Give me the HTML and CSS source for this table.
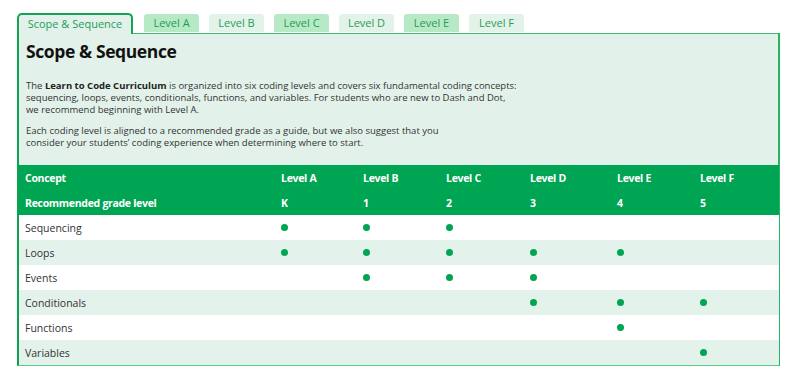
FILE: index.html
```html
<!DOCTYPE html>
<html>
<head>
<meta charset="utf-8">
<link rel="stylesheet" href="styles.css">
</head>
<body>
<div class="wrap">
  <div class="tabs">
    <div class="tab active">Scope &amp; Sequence</div>
    <div class="tab dark">Level A</div>
    <div class="tab light">Level B</div>
    <div class="tab dark">Level C</div>
    <div class="tab light">Level D</div>
    <div class="tab dark">Level E</div>
    <div class="tab light">Level F</div>
  </div>
  <div class="panel">
    <div class="intro">
      <h1 class="title">Scope &amp; Sequence</h1>
      <p class="para">The <b>Learn to Code Curriculum</b> is organized into six coding levels and covers six fundamental coding concepts:<br>sequencing, loops, events, conditionals, functions, and variables. For students who are new to Dash and Dot,<br>we recommend beginning with Level A.</p>
      <p class="para">Each coding level is aligned to a recommended grade as a guide, but we also suggest that you<br>consider your students’ coding experience when determining where to start.</p>
    </div>
    <table class="grid">
      <colgroup>
        <col class="c0"><col class="c1"><col class="c2"><col class="c3"><col class="c4"><col class="c5"><col class="c6">
      </colgroup>
      <thead>
        <tr class="head"><th>Concept</th><th>Level A</th><th>Level B</th><th>Level C</th><th>Level D</th><th>Level E</th><th>Level F</th></tr>
        <tr class="head"><th>Recommended grade level</th><th>K</th><th>1</th><th>2</th><th>3</th><th>4</th><th>5</th></tr>
      </thead>
      <tbody>
        <tr><td>Sequencing</td><td><span class="dot"></span></td><td><span class="dot"></span></td><td><span class="dot"></span></td><td></td><td></td><td></td></tr>
        <tr class="alt"><td>Loops</td><td><span class="dot"></span></td><td><span class="dot"></span></td><td><span class="dot"></span></td><td><span class="dot"></span></td><td><span class="dot"></span></td><td></td></tr>
        <tr><td>Events</td><td></td><td><span class="dot"></span></td><td><span class="dot"></span></td><td><span class="dot"></span></td><td></td><td></td></tr>
        <tr class="alt"><td>Conditionals</td><td></td><td></td><td></td><td><span class="dot"></span></td><td><span class="dot"></span></td><td><span class="dot"></span></td></tr>
        <tr><td>Functions</td><td></td><td></td><td></td><td></td><td><span class="dot"></span></td><td></td></tr>
        <tr class="alt"><td>Variables</td><td></td><td></td><td></td><td></td><td></td><td><span class="dot"></span></td></tr>
      </tbody>
    </table>
  </div>
</div>
</body>
</html>
```
FILE: styles.css
```css
* { box-sizing: border-box; }
body {
  margin: 0;
  background: #fff;
  font-family: "Open Sans", "Liberation Sans", sans-serif;
  color: #333;
}
.wrap {
  padding: 13px 0 0 17px;
  width: 780px;
}
.tabs {
  display: flex;
  align-items: flex-end;
  gap: 10px;
  height: 20px;
  position: relative;
  z-index: 1;
}
.tab {
  height: 18px;
  line-height: 18px;
  font-size: 11px;
  color: #1f9d55;
  text-align: center;
  border-radius: 3px 3px 0 0;
  width: 55px;
  margin-bottom: 1px;
}
.tab.dark { background: #b7e9c7; }
.tab.light { background: #e3f3ea; }
.tab.active {
  width: 116px;
  height: 21px;
  line-height: 18px;
  margin-bottom: -1px;
  margin-right: 1px;
  background: #e2f2ea;
  border: 2px solid #14a453;
  border-bottom: none;
  border-radius: 5px 5px 0 0;
}
.panel {
  background: #e2f2ea;
  border-top: 1px solid #3bbb72;
  border-left: 2px solid #0ba34f;
  border-right: 2px solid #27b463;
  border-bottom: 1px solid #5cc98c;
}
.intro {
  padding: 6px 0 16px 7px;
}
.title {
  margin: 0;
  font-size: 17.5px;
  font-weight: 700;
  color: #111;
  line-height: 22px;
  letter-spacing: -0.4px;
}
.para {
  margin: 18px 0 0;
  font-size: 9.5px;
  line-height: 12px;
  color: #333;
}
.para + .para { margin-top: 9px; }
.para b { font-weight: 700; color: #222; }
.grid {
  width: 760px;
  border-collapse: collapse;
  table-layout: fixed;
  font-size: 10.5px;
}
.c0 { width: 256px; }
.c1 { width: 82px; }
.c2 { width: 83px; }
.c3 { width: 84px; }
.c4 { width: 87px; }
.c5 { width: 83px; }
.c6 { width: 85px; }
.grid th, .grid td {
  height: 25px;
  padding: 0 6px;
  text-align: left;
  vertical-align: middle;
}
.head { background: #00a553; }
.head th { color: #fff; font-weight: 700; letter-spacing: -0.3px; }
.grid tbody tr { background: #fff; }
.grid tbody tr.alt { background: #e3f2ea; }
.grid td { color: #333; }
.dot {
  display: block;
  width: 7px;
  height: 7px;
  border-radius: 50%;
  background: #00a553;
}
```
